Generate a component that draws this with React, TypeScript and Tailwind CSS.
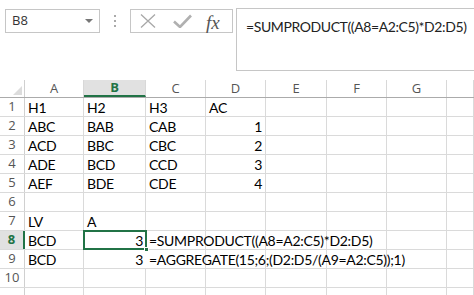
const cols = ["A", "B", "C", "D", "E", "F", "G", ""];
const colW = ["w-[59px]", "w-[62px]", "w-[60px]", "w-[60px]", "w-[61px]", "w-[60px]", "w-[60px]", "flex-1"];

type Cell = { v: string; right?: boolean; spill?: boolean };

const rows: Cell[][] = [
  [{ v: "H1" }, { v: "H2" }, { v: "H3" }, { v: "AC" }],
  [{ v: "ABC" }, { v: "BAB" }, { v: "CAB" }, { v: "1", right: true }],
  [{ v: "ACD" }, { v: "BBC" }, { v: "CBC" }, { v: "2", right: true }],
  [{ v: "ADE" }, { v: "BCD" }, { v: "CCD" }, { v: "3", right: true }],
  [{ v: "AEF" }, { v: "BDE" }, { v: "CDE" }, { v: "4", right: true }],
  [],
  [{ v: "LV" }, { v: "A" }],
  [{ v: "BCD" }, { v: "3", right: true }, { v: "=SUMPRODUCT((A8=A2:C5)*D2:D5)", spill: true }],
  [{ v: "BCD" }, { v: "3", right: true }, { v: "=AGGREGATE(15;6;(D2:D5/(A9=A2:C5));1)", spill: true }],
  [],
  [],
];

function FormulaBar() {
  return (
    <div className="flex items-start h-[80px] pt-[9px] pl-[5px] bg-white">
      <div className="shrink-0 w-[95px] h-[24px] border border-[#c6c6c6] flex items-center justify-between pl-[6px] pr-[6px] text-[13px] text-[#333]">
        <span>B8</span>
        <svg width="8" height="5" viewBox="0 0 8 5">
          <path d="M0 0 L8 0 L4 4 Z" fill="#777" />
        </svg>
      </div>
      <div className="shrink-0 w-[30px] h-[24px] flex items-center justify-center">
        <svg width="2" height="12" viewBox="0 0 2 12">
          <rect x="0" y="0" width="2" height="2" fill="#aaa" />
          <rect x="0" y="5" width="2" height="2" fill="#aaa" />
          <rect x="0" y="10" width="2" height="2" fill="#aaa" />
        </svg>
      </div>
      <div className="shrink-0 w-[103px] h-[24px] border border-[#c6c6c6] flex items-center pl-[9px]">
        <svg width="16" height="14" viewBox="0 0 16 14">
          <path d="M1 0.5 L15 13.5 M15 0.5 L1 13.5" stroke="#a8a8a8" strokeWidth="1.3" />
        </svg>
        <svg className="ml-[17px]" width="19" height="14" viewBox="0 0 19 14">
          <path d="M1 7.5 L7 13 L18 1.5" stroke="#b0b0b0" strokeWidth="2.6" fill="none" />
        </svg>
        <span className="ml-[14px] mt-[2px] text-[19px] leading-none italic text-[#555] font-['Liberation_Serif',serif]">fx</span>
      </div>
      <div className="ml-[3px] min-w-0 flex-1 h-[63px] -mt-[1px] border border-[#c6c6c6] border-r-0 pl-[9px] pt-[9px] text-[14px] tracking-[-0.4px] leading-[18px] text-[#222] font-['Lato',sans-serif] whitespace-nowrap">
        =SUMPRODUCT((A8=A2:C5)*D2:D5)
      </div>
    </div>
  );
}

export default function App() {
  return (
    <div className="w-[474px] h-[295px] overflow-hidden bg-white font-['Open_Sans',sans-serif]">
      <FormulaBar />
      {/* column headers */}
      <div className="flex h-[18px] border-b border-[#ababab] bg-white">
        <div className="shrink-0 w-[25px] border-r border-[#d0d0d0] relative">
          <svg className="absolute right-[2px] bottom-[2px]" width="9" height="9" viewBox="0 0 9 9">
            <path d="M9 0 L9 9 L0 9 Z" fill="#dcdcdc" />
          </svg>
        </div>
        {cols.map((c, i) => (
          <div
            key={i}
            className={
              colW[i] +
              " shrink-0 flex items-center justify-center text-[13px] border-r border-[#d8d8d8] " +
              (c === "B"
                ? "bg-[#e1e1e1] text-[#217346] font-bold border-b-2 border-b-[#217346]"
                : "text-[#555]")
            }
          >
            {c}
          </div>
        ))}
      </div>
      {rows.map((r, ri) => {
        const sel = ri === 7;
        return (
          <div key={ri} className="flex h-[19px] border-b border-[#dadada]">
            <div
              className={
                "shrink-0 w-[25px] flex items-center justify-center text-[13px] " +
                (sel
                  ? "bg-[#e1e1e1] text-[#217346] font-bold border-r-2 border-[#217346]"
                  : "text-[#555] border-r border-[#d0d0d0]")
              }
            >
              {ri < 10 ? ri + 1 : ""}
            </div>
            {cols.map((_, ci) => {
              const cell = r[ci];
              const isSel = sel && ci === 1;
              return (
                <div
                  key={ci}
                  className={
                    colW[ci] +
                    " shrink-0 relative flex items-center text-[14px] tracking-[-0.3px] text-black whitespace-nowrap font-['Lato',sans-serif] " +
                    (cell?.spill ? "overflow-visible z-10 " : "") +
                    (cell?.right ? "justify-end pr-[3px] " : "pl-[3px] ") +
                    (ci === 1 && (ri === 7 || ri === 8) ? "" : "border-r border-[#dadada]")
                  }
                >
                  {cell?.v}
                  {isSel && (
                    <>
                      <div className="absolute -left-px -top-px -right-px -bottom-px border-2 border-[#217346]" />
                      <div className="absolute -right-[3px] -bottom-[3px] w-[5px] h-[5px] bg-[#217346] border border-white" />
                    </>
                  )}
                </div>
              );
            })}
          </div>
        );
      })}
    </div>
  );
}
